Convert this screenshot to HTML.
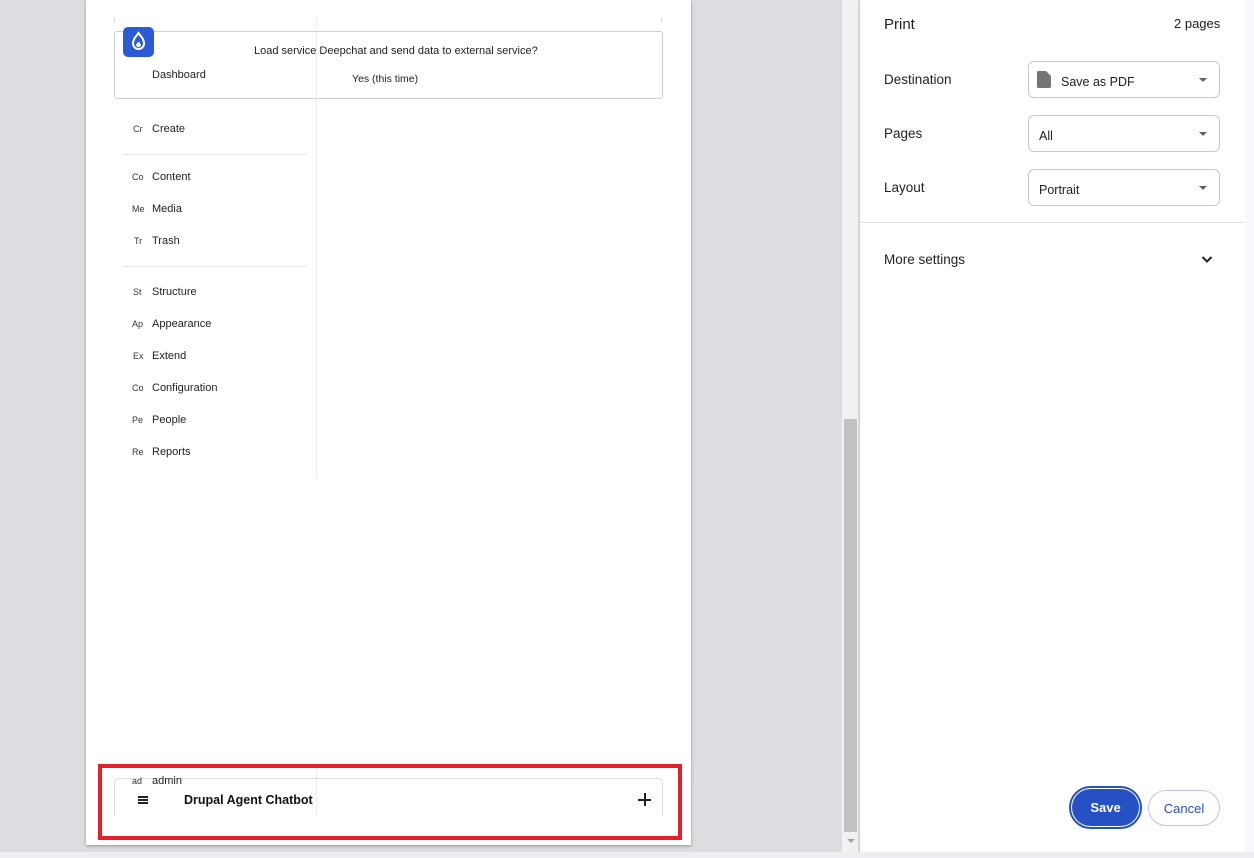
<!DOCTYPE html>
<html><head><meta charset="utf-8"><style>
*{margin:0;padding:0;box-sizing:border-box}
html,body{width:1254px;height:858px;overflow:hidden;background:#dcdde1;font-family:"Liberation Sans",Arial,sans-serif}
.abs{position:absolute}
.page{left:86px;top:0;width:605px;height:845px;background:#fff;box-shadow:0 1px 3px rgba(0,0,0,.35)}
.t{position:absolute;font-size:11px;color:#222;white-space:nowrap}
.ab{position:absolute;font-size:9px;color:#333;white-space:nowrap}
.hr{position:absolute;height:1px;background:#e6e6e6}
.lbl{position:absolute;left:884px;font-size:13.5px;color:#202124}
.sel{position:absolute;left:1028px;width:192px;height:37px;border:1px solid #c8c8c8;border-radius:6px;background:#fff;font-size:12.5px;color:#202124}
.sel .arr{position:absolute;right:12px;top:16px;width:0;height:0;border-left:4px solid transparent;border-right:4px solid transparent;border-top:4px solid #5f6368}
</style></head><body>
<div class="abs page">
  <div class="abs" style="left:230px;top:17px;width:1px;height:461px;background:#ececec"></div>
  <div class="abs" style="left:28px;top:17px;width:1px;height:5px;background:#ddd"></div>
  <div class="abs" style="left:575px;top:17px;width:1px;height:5px;background:#ddd"></div>
  <div class="abs" style="left:28px;top:31px;width:549px;height:68px;border:1px solid #cfcfcf;border-radius:3px;background:rgba(255,255,255,.6)"></div>
  <div class="abs" style="left:230px;top:17px;width:1px;height:82px;background:#ececec"></div>
  <div class="abs" style="left:37px;top:27px;width:31px;height:30px;background:#2a5ad6;border-radius:5px">
    <svg width="31" height="30" viewBox="0 0 31 30"><path d="M15.5 6 C13 9.5 10 12 10 16.5 A5.5 5.5 0 0 0 21 16.5 C21 12 18 9.5 15.5 6 Z" fill="none" stroke="#fff" stroke-width="2"/><path d="M15.5 14.5 l2.5 3 a2.5 2.5 0 1 1 -5 0 z" fill="#fff"/></svg>
  </div>
  <div class="t" style="left:168px;top:45px">Load service Deepchat and send data to external service?</div>
  <div class="t" style="left:66px;top:69px">Dashboard</div>
  <div class="t" style="left:266px;top:73px;font-size:10.5px">Yes (this time)</div>
  <div class="ab" style="left:47px;top:124px">Cr</div><div class="t" style="left:66px;top:123px">Create</div>
  <div class="hr" style="left:36px;top:154px;width:184px"></div>
  <div class="ab" style="left:46px;top:172px">Co</div><div class="t" style="left:66px;top:171px">Content</div>
  <div class="ab" style="left:46px;top:204px">Me</div><div class="t" style="left:66px;top:203px">Media</div>
  <div class="ab" style="left:48px;top:236px">Tr</div><div class="t" style="left:66px;top:235px">Trash</div>
  <div class="hr" style="left:36px;top:266px;width:184px"></div>
  <div class="ab" style="left:47px;top:287px">St</div><div class="t" style="left:66px;top:286px">Structure</div>
  <div class="ab" style="left:46px;top:319px">Ap</div><div class="t" style="left:66px;top:318px">Appearance</div>
  <div class="ab" style="left:47px;top:351px">Ex</div><div class="t" style="left:66px;top:350px">Extend</div>
  <div class="ab" style="left:46px;top:383px">Co</div><div class="t" style="left:66px;top:382px">Configuration</div>
  <div class="ab" style="left:46px;top:415px">Pe</div><div class="t" style="left:66px;top:414px">People</div>
  <div class="ab" style="left:46px;top:447px">Re</div><div class="t" style="left:66px;top:446px">Reports</div>
  <div class="abs" style="left:28px;top:766px;width:203px;height:1px;background:#ececec"></div>
  <div class="abs" style="left:230px;top:766px;width:1px;height:50px;background:#ececec"></div>
  <div class="abs" style="left:28px;top:778px;width:549px;height:38px;border:1px solid #ddd;border-bottom:none;border-radius:5px 5px 0 0"></div>
  <div class="ab" style="left:46px;top:776px">ad</div><div class="t" style="left:66px;top:775px">admin</div>
  <div class="abs" style="left:52px;top:796px;width:10px;height:8px;border-top:2px solid #222;border-bottom:2px solid #222"></div>
  <div class="abs" style="left:52px;top:799px;width:10px;height:2px;background:#222"></div>
  <div class="t" style="left:98px;top:793px;font-size:12.5px;font-weight:bold;color:#111">Drupal Agent Chatbot</div>
  <div class="abs" style="left:552px;top:799px;width:13px;height:1.5px;background:#222"></div>
  <div class="abs" style="left:558px;top:793px;width:1.5px;height:13px;background:#222"></div>
  <div class="abs" style="left:12px;top:764px;width:584px;height:76px;border:4px solid #e3202c"></div>
</div>
<div class="abs" style="left:842px;top:0;width:16px;height:858px;background:#f1f1f1"></div>
<div class="abs" style="left:844px;top:419px;width:13px;height:413px;background:#c1c1c1"></div>
<div class="abs" style="left:847px;top:839px;width:0;height:0;border-left:4px solid transparent;border-right:4px solid transparent;border-top:4px solid #a3a3a3"></div>
<div class="abs" style="left:860px;top:0;width:385px;height:852px;background:#fff;box-shadow:0 1px 2px rgba(0,0,0,.2)"></div>
<div class="abs" style="left:1245px;top:0;width:9px;height:858px;background:#f8f9fc"></div>
<div class="abs" style="left:0;top:852px;width:1254px;height:6px;background:#eceef2"></div>
<div class="lbl" style="top:16px;font-size:15px">Print</div>
<div class="lbl" style="left:1174px;top:16px;font-size:13px">2 pages</div>
<div class="lbl" style="top:72px">Destination</div>
<div class="sel" style="top:61px"><svg class="abs" style="left:8px;top:9px" width="14" height="17" viewBox="0 0 14 17"><path d="M1.5 0 H9 L14 5 V15.5 A1.5 1.5 0 0 1 12.5 17 H1.5 A1.5 1.5 0 0 1 0 15.5 V1.5 A1.5 1.5 0 0 1 1.5 0Z" fill="#757575"/></svg><span class="abs" style="left:32px;top:13px">Save as PDF</span><div class="arr"></div></div>
<div class="lbl" style="top:126px">Pages</div>
<div class="sel" style="top:115px"><span class="abs" style="left:10px;top:13px">All</span><div class="arr"></div></div>
<div class="lbl" style="top:180px">Layout</div>
<div class="sel" style="top:169px"><span class="abs" style="left:10px;top:13px">Portrait</span><div class="arr"></div></div>
<div class="abs" style="left:860px;top:222px;width:385px;height:1px;background:#e0e0e0"></div>
<div class="lbl" style="top:252px">More settings</div>
<svg class="abs" style="left:1201px;top:255px" width="12" height="9" viewBox="0 0 12 9"><path d="M1.5 2 L6 6.5 L10.5 2" fill="none" stroke="#202124" stroke-width="2"/></svg>
<div class="abs" style="left:1069px;top:786px;width:73px;height:43px;border:2px solid #2551c5;border-radius:22px"></div>
<div class="abs" style="left:1072px;top:789px;width:67px;height:37px;background:#2551c5;border-radius:19px;color:#fff;font-size:13px;font-weight:bold;text-align:center;line-height:38px">Save</div>
<div class="abs" style="left:1148px;top:790px;width:72px;height:36px;border:1px solid #b9c6ea;border-radius:18px;color:#2551c5;font-size:13px;text-align:center;line-height:36px">Cancel</div>
</body></html>
